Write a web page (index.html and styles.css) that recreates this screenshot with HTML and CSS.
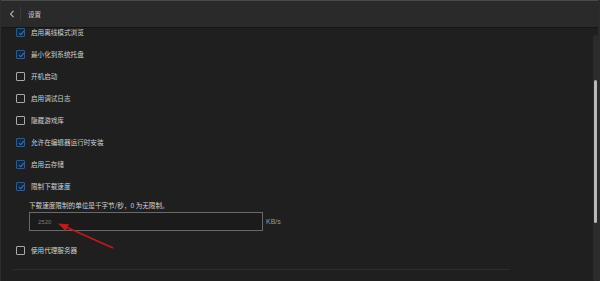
FILE: index.html
```html
<!DOCTYPE html>
<html lang="zh">
<head>
<meta charset="utf-8">
<link rel="stylesheet" href="styles.css">
</head>
<body>
<div class="app">
  <header class="topbar">
    <button class="back" aria-label="返回">
      <svg width="6" height="8" viewBox="0 0 6 8"><path d="M4.5 0.8 L1.6 4 L4.5 7.2" fill="none" stroke="#bdbdbd" stroke-width="1.1"/></svg>
    </button>
    <span class="divider"></span>
    <span class="title">设置</span>
  </header>
  <main class="content">
    <div class="list">
      <label class="row"><span class="cb on"></span><span>启用离线模式浏览</span></label>
      <label class="row"><span class="cb on"></span><span>最小化到系统托盘</span></label>
      <label class="row"><span class="cb"></span><span>开机启动</span></label>
      <label class="row"><span class="cb"></span><span>启用调试日志</span></label>
      <label class="row"><span class="cb"></span><span>隐藏游戏库</span></label>
      <label class="row"><span class="cb on"></span><span>允许在编辑器运行时安装</span></label>
      <label class="row"><span class="cb on"></span><span>启用云存储</span></label>
      <label class="row"><span class="cb on"></span><span>限制下载速度</span></label>
      <div class="limit">
        <p class="desc">下载速度限制的单位是千字节/秒，0 为无限制。</p>
        <div class="field">
          <div class="input">2520</div>
          <span class="unit">KB/s</span>
        </div>
      </div>
      <label class="row proxy"><span class="cb"></span><span>使用代理服务器</span></label>
      <div class="sep"></div>
    </div>
    <div class="scrollbar"><div class="thumb"></div></div>
    <svg class="arrow" width="600" height="281" viewBox="0 0 600 281">
      <line x1="113" y1="248" x2="66" y2="227" stroke="#c8171c" stroke-width="1.4"/>
      <path d="M58 223.5 L69 224.2 L65.5 231 Z" fill="#c8171c"/>
    </svg>
  </main>
</div>
</body>
</html>
```
FILE: styles.css
```css
* { box-sizing: border-box; margin: 0; padding: 0; }
html, body { width: 600px; height: 281px; overflow: hidden; }
body {
  background: #1f1f1f;
  font-family: "Noto Sans CJK SC", "Noto Sans", sans-serif;
  color: #c9c9c9;
  font-size: 7px;
}
.app {
  height: 281px;
  display: flex;
  flex-direction: column;
  border-left: 1px solid #2e2e2e;
  border-right: 2px solid #2c2c2c;
}
.topbar {
  height: 28px;
  flex: none;
  background: #2a2a2a;
  border-top: 1px solid #4a4a4a;
  border-bottom: 1px solid #161616;
  display: flex;
  align-items: center;
  position: relative;
  z-index: 2;
}
.back {
  background: none;
  border: none;
  width: 19px;
  height: 20px;
  display: flex;
  align-items: center;
  justify-content: center;
  padding-left: 2px;
}
.divider {
  width: 1px;
  height: 14px;
  background: #3a3a3a;
}
.title {
  margin-left: 7px;
  font-size: 6.5px;
  color: #d0d0d0;
}
.content {
  flex: 1;
  position: relative;
  overflow: hidden;
}
.list {
  margin-top: -7px;
  display: flex;
  flex-direction: column;
}
.row {
  height: 22px;
  display: flex;
  align-items: center;
  padding-left: 15px;
  gap: 6px;
  font-size: 6.6px;
  color: #cfcfcf;
}
.cb {
  width: 9px;
  height: 9px;
  border: 1px solid #a9a9a9;
  border-radius: 1px;
  flex: none;
  position: relative;
}
.cb.on {
  border-color: #2c5b8e;
  background: #16273b;
}
.cb.on::after {
  content: "";
  position: absolute;
  left: 2.5px;
  top: 1px;
  width: 2px;
  height: 3.5px;
  border-right: 1px solid #4a76a8;
  border-bottom: 1px solid #4a76a8;
  transform: rotate(40deg);
}
.limit {
  padding-left: 28px;
  margin-top: 3px;
}
.desc {
  font-size: 6.6px;
  line-height: 10px;
  color: #d2d2d2;
}
.field {
  display: flex;
  align-items: center;
  margin-top: 2px;
  gap: 3px;
}
.input {
  width: 234px;
  height: 19px;
  border: 1px solid #6a6a6a;
  background: #1b1b1b;
  display: flex;
  align-items: center;
  padding-left: 8px;
  font-size: 6px;
  color: #7a7a7a;
  font-family: "Liberation Sans", sans-serif;
}
.unit {
  font-family: "Liberation Sans", sans-serif;
  font-size: 7px;
  color: #9a9a9a;
}
.proxy { margin-top: 8px; }
.sep {
  margin: 8px 88px 0 12px;
  height: 1px;
  background: #2c2c2c;
}
.scrollbar {
  position: absolute;
  top: 7px;
  right: 0px;
  width: 5px;
  bottom: 0;
  background: #2b2b2b;
  border-radius: 2px;
}
.thumb {
  position: absolute;
  top: 45px;
  left: 1px;
  width: 3px;
  height: 143px;
  background: #b9b9b9;
  border-radius: 1.5px;
}
.arrow {
  position: absolute;
  left: -1px;
  top: -28px;
  pointer-events: none;
}
```
